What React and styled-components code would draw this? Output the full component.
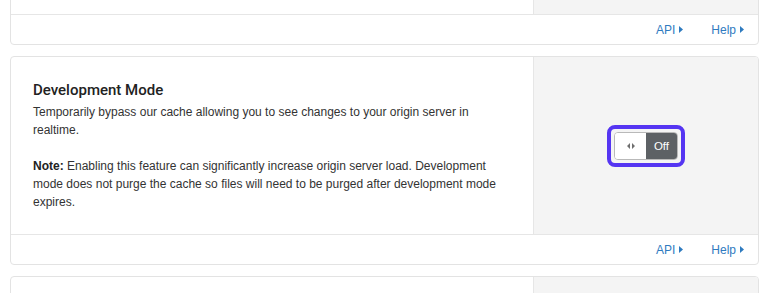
import React from "react";
import styled, { createGlobalStyle } from "styled-components";

const Global = createGlobalStyle`
  html, body { margin: 0; padding: 0; background: #fff; }
  body {
    height: 293px;
    overflow: hidden;
    font-family: "Liberation Sans", Arial, sans-serif;
    color: #333;
    -webkit-font-smoothing: antialiased;
  }
`;

const Page = styled.div`
  padding: 0 9px 0 10px;
  display: flex;
  flex-direction: column;
  gap: 11px;
  margin-top: -87px;
`;

const Card = styled.section`
  border: 1px solid #e3e3e3;
  border-radius: 4px;
  background: #fff;
  overflow: hidden;
`;

const Body = styled.div`
  display: flex;
  min-height: ${(p) => p.$minHeight || 0}px;
`;

const Main = styled.div`
  flex: 1;
  padding: 23px 22px 23px 22px;
`;

const Side = styled.div`
  width: 224px;
  flex: none;
  background: #f4f4f4;
  border-left: 1px solid #e6e6e6;
  display: flex;
  align-items: center;
  justify-content: center;
`;

const Title = styled.h3`
  margin: 0 0 3px;
  font-family: Roboto, "Liberation Sans", sans-serif;
  font-size: 15px;
  line-height: 20px;
  font-weight: 500;
  color: #222;
`;

const Text = styled.p`
  margin: 0 0 18px;
  max-width: 470px;
  font-size: 12px;
  line-height: 18px;
  color: #333;
  &:last-child { margin-bottom: 0; }
  b { font-weight: 700; color: #222; }
`;

const Footer = styled.div`
  border-top: 1px solid #e6e6e6;
  height: 29px;
  display: flex;
  align-items: center;
  justify-content: flex-end;
  gap: 28px;
  padding-right: 14px;
`;

const Link = styled.a`
  display: inline-flex;
  align-items: center;
  gap: 4px;
  font-size: 12px;
  color: #2f7bbf;
  text-decoration: none;
  svg { display: block; }
`;

const Focus = styled.div`
  outline: 4px solid #5535f2;
  outline-offset: 3px;
  border-radius: 1px;
  display: flex;
`;

const Toggle = styled.button`
  display: flex;
  width: 64px;
  height: 28px;
  padding: 0;
  border: 1px solid #b9b9b9;
  border-radius: 4px;
  overflow: hidden;
  background: #fff;
  cursor: pointer;
  font-family: inherit;
`;

const Knob = styled.span`
  width: 31px;
  height: 100%;
  display: flex;
  align-items: center;
  justify-content: center;
  background: #fff;
`;

const State = styled.span`
  flex: 1;
  display: flex;
  align-items: center;
  justify-content: center;
  background: #5d6165;
  color: #fff;
  font-size: 11.5px;
`;

const Caret = () => (
  <svg width="4" height="7" viewBox="0 0 4 7">
    <path d="M0 0 L4 3.5 L0 7 Z" fill="#2f7bbf" />
  </svg>
);

const Arrows = () => (
  <svg width="8" height="6" viewBox="0 0 8 6">
    <path d="M3 0 L0 3 L3 6 Z M5 0 L8 3 L5 6 Z" fill="#6f6f6f" />
  </svg>
);

const CardFooter = () => (
  <Footer>
    <Link href="#">API <Caret /></Link>
    <Link href="#">Help <Caret /></Link>
  </Footer>
);

export default function App() {
  return (
    <>
      <Global />
      <Page>
        <Card>
          <Body $minHeight={100}>
            <Main />
            <Side />
          </Body>
          <CardFooter />
        </Card>
        <Card>
          <Body>
            <Main>
              <Title>Development Mode</Title>
              <Text>
                Temporarily bypass our cache allowing you to see changes to your origin server in realtime.
              </Text>
              <Text>
                <b>Note:</b> Enabling this feature can significantly increase origin server load. Development
                mode does not purge the cache so files will need to be purged after development mode expires.
              </Text>
            </Main>
            <Side>
              <Focus>
                <Toggle aria-label="Development Mode">
                  <Knob><Arrows /></Knob>
                  <State>Off</State>
                </Toggle>
              </Focus>
            </Side>
          </Body>
          <CardFooter />
        </Card>
        <Card>
          <Body $minHeight={100}>
            <Main />
            <Side />
          </Body>
        </Card>
      </Page>
    </>
  );
}
